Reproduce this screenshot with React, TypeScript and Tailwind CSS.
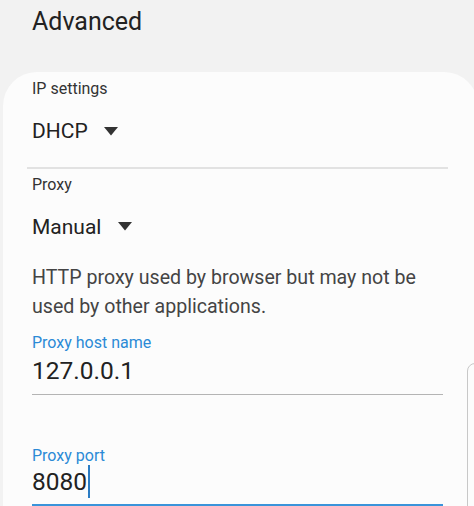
import React from "react";

function Caret() {
  return (
    <svg width="14" height="9" viewBox="0 0 14 9" className="shrink-0">
      <path d="M0 0 L14 0 L7 8.5 Z" fill="#333333" />
    </svg>
  );
}

export default function App() {
  return (
    <div
      className="relative w-[474px] h-[506px] overflow-hidden bg-[#f2f2f2]"
      style={{ fontFamily: "Roboto, 'Noto Sans', sans-serif" }}
    >
      <div className="h-[72px] pl-[32px] pt-[8px]">
        <div className="text-[25px] leading-[28px] text-[#222222]">Advanced</div>
      </div>
      <div className="ml-[3px] w-[475px] h-[440px] rounded-t-[34px] bg-[#fcfcfc] pt-[7px] pl-[24px] pr-[30px]">
        <div className="pl-[5px] text-[16px] leading-[20px] text-[#333333]">IP settings</div>
        <div className="pl-[5px] mt-[18px] flex items-center gap-[16px] h-[28px]">
          <span className="text-[21px] leading-[28px] text-[#222222]">DHCP</span>
          <Caret />
        </div>
        <div className="mt-[22px] h-[1.5px] bg-[#e2e2e2]" />
        <div className="pl-[5px] mt-[6px] text-[16px] leading-[20px] text-[#333333]">Proxy</div>
        <div className="pl-[5px] mt-[18px] flex items-center gap-[17px] h-[28px]">
          <span className="text-[21px] leading-[28px] text-[#222222]">Manual</span>
          <Caret />
        </div>
        <div className="pl-[5px] mt-[22px] text-[19.6px] leading-[29px] text-[#444444]">
          HTTP proxy used by browser but may not be
          <br />
          used by other applications.
        </div>
        <div className="mx-[5px]">
          <div className="mt-[12px] text-[16px] leading-[20px] text-[#2b8ad6]">Proxy host name</div>
          <div className="mt-[4px] text-[24.5px] leading-[28px] text-[#222222]">127.0.0.1</div>
          <div className="mt-[9px] h-[1px] bg-[#b4b4b4]" />
          <div className="mt-[51px] text-[16px] leading-[20px] text-[#2b8ad6]">Proxy port</div>
          <div className="mt-[2px] flex items-center h-[28px]">
            <span className="text-[24.5px] leading-[28px] text-[#222222]">8080</span>
            <span className="ml-[1px] w-[2px] h-[33px] bg-[#2b7cc4]" />
          </div>
          <div className="mt-[8px] h-[2px] bg-[#3a94da]" />
        </div>
      </div>
      <div className="absolute left-[467px] top-[363px] w-[20px] h-[200px] border border-[#c8c8c8] rounded-tl-[8px] bg-[#fcfcfc]" />
    </div>
  );
}
